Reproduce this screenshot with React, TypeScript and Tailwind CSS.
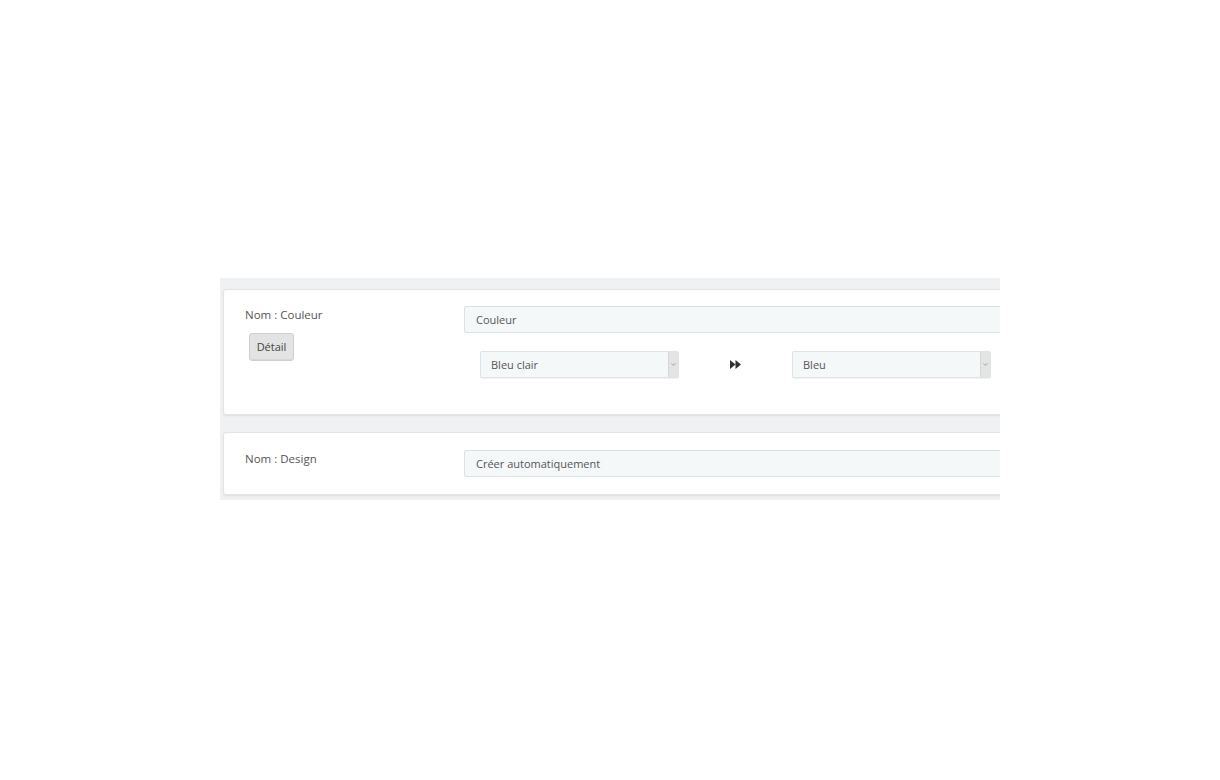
import { ChevronDown } from 'lucide-react'

function FakeSelect({ value }: { value: string }) {
  return (
    <div className="flex h-[27px] w-[199px] items-stretch rounded-[2px] border border-[#dde3e6] bg-[#f5f8f9] shadow-[0_1px_1px_rgba(0,0,0,0.06)]">
      <span className="flex flex-1 items-center pl-[10px] pt-[2px] text-[11px] text-[#555]">{value}</span>
      <span className="flex w-[10px] items-center justify-center border-l border-[#d6d6d6] bg-[#e4e4e4]">
        <ChevronDown size={7} strokeWidth={2.5} className="text-[#888]" />
      </span>
    </div>
  )
}

function FakeInput({ value }: { value: string }) {
  return (
    <div className="flex h-[27px] w-[560px] items-center rounded-[2px] border border-[#dbe2e5] bg-[#f5f8f9] pl-[11px] pt-[2px] text-[11px] text-[#555]">
      {value}
    </div>
  )
}

export default function App() {
  return (
    <div
      className="h-[780px] w-[1220px] bg-white pl-[220px] pt-[278px]"
      style={{ fontFamily: '"Open Sans", "Noto Sans", sans-serif' }}
    >
      <div className="w-[780px] overflow-hidden bg-[#f0f1f3] pb-[5px] pl-[3px] pt-[11px]">
        {/* Couleur */}
        <div className="flex h-[126px] w-[800px] rounded-l-[3px] border border-[#e2e5e8] bg-white shadow-[0_1px_2px_rgba(0,0,0,0.08)]">
          <div className="w-[240px] shrink-0 pl-[21px] pt-[16px]">
            <div className="text-[11.5px] leading-[18px] text-[#555]">Nom : Couleur</div>
            <button className="ml-[4px] mt-[9px] h-[28px] w-[45px] rounded-[3px] border border-[#cfcfcf] bg-[#e3e3e3] pt-[1px] text-[11px] text-[#444] shadow-[inset_0_-1px_0_rgba(0,0,0,0.05)]">
              Détail
            </button>
          </div>
          <div className="shrink-0 pt-[16px]">
            <FakeInput value="Couleur" />
            <div className="mt-[18px] flex items-center pl-[16px]">
              <FakeSelect value="Bleu clair" />
              <div className="flex w-[113px] justify-center">
                <svg width="11" height="9" viewBox="0 0 11 9" className="text-[#333]">
                  <path d="M0 0 L5.5 4.5 L0 9 Z M5.5 0 L11 4.5 L5.5 9 Z" fill="currentColor" />
                </svg>
              </div>
              <FakeSelect value="Bleu" />
            </div>
          </div>
        </div>

        {/* Design */}
        <div className="mt-[17px] flex h-[63px] w-[800px] rounded-l-[3px] border border-[#e2e5e8] bg-white shadow-[0_1px_2px_rgba(0,0,0,0.08)]">
          <div className="w-[240px] shrink-0 pl-[21px] pt-[17px]">
            <div className="text-[11.5px] leading-[18px] text-[#555]">Nom : Design</div>
          </div>
          <div className="shrink-0 pt-[17px]">
            <FakeInput value="Créer automatiquement" />
          </div>
        </div>
      </div>
    </div>
  )
}
